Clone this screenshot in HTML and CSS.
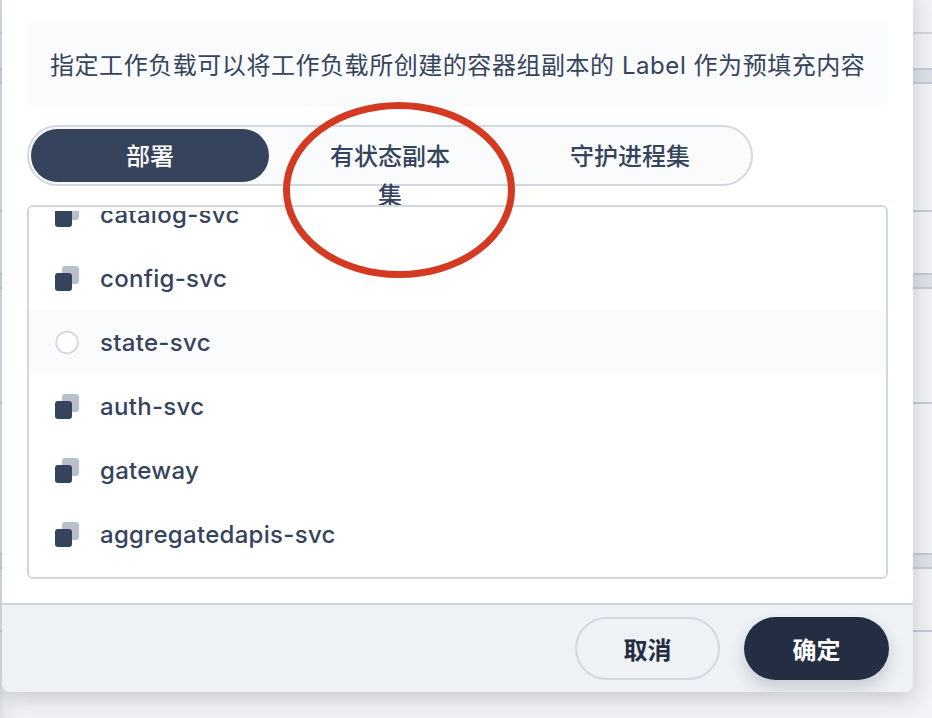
FILE: index.html
```html
<!DOCTYPE html>
<html lang="zh">
<head>
<meta charset="utf-8">
<title>Workload selector</title>
<link rel="stylesheet" href="styles.css">
</head>
<body>
<div class="page">
  <div class="bg-table">
    <div class="bg-row r1"></div>
    <div class="bg-row r2"></div>
    <div class="bg-row band"></div>
    <div class="bg-row r3"></div>
    <div class="bg-row r4"></div>
    <div class="bg-row band"></div>
    <div class="bg-row r5"></div>
    <div class="bg-row r6"></div>
    <div class="bg-row band"></div>
    <div class="bg-row r7"></div>
  </div>

  <div class="modal">
    <div class="modal-body">
      <div class="info">指定工作负载可以将工作负载所创建的容器组副本的 Label 作为预填充内容</div>

      <div class="tabs">
        <div class="tab active">部署</div>
        <div class="tab">有状态副本集</div>
        <div class="tab">守护进程集</div>
      </div>

      <div class="list">
        <div class="viewport">
          <div class="rows">
            <div class="row">
              <svg class="ico" viewBox="0 0 25 25"><rect x="7" y="0" width="17" height="18" rx="3" fill="#b7c0cb"/><rect x="0" y="7" width="17" height="18" rx="3" fill="#36435c"/></svg>
              <span class="name">catalog-svc</span>
            </div>
            <div class="row">
              <svg class="ico" viewBox="0 0 25 25"><rect x="7" y="0" width="17" height="18" rx="3" fill="#b7c0cb"/><rect x="0" y="7" width="17" height="18" rx="3" fill="#36435c"/></svg>
              <span class="name">config-svc</span>
            </div>
            <div class="row hover">
              <svg class="ico" viewBox="0 0 25 25"><circle cx="12" cy="12.5" r="10.8" fill="#ffffff" stroke="#d2d8df" stroke-width="1.8"/></svg>
              <span class="name">state-svc</span>
            </div>
            <div class="row">
              <svg class="ico" viewBox="0 0 25 25"><rect x="7" y="0" width="17" height="18" rx="3" fill="#b7c0cb"/><rect x="0" y="7" width="17" height="18" rx="3" fill="#36435c"/></svg>
              <span class="name">auth-svc</span>
            </div>
            <div class="row">
              <svg class="ico" viewBox="0 0 25 25"><rect x="7" y="0" width="17" height="18" rx="3" fill="#b7c0cb"/><rect x="0" y="7" width="17" height="18" rx="3" fill="#36435c"/></svg>
              <span class="name">gateway</span>
            </div>
            <div class="row">
              <svg class="ico" viewBox="0 0 25 25"><rect x="7" y="0" width="17" height="18" rx="3" fill="#b7c0cb"/><rect x="0" y="7" width="17" height="18" rx="3" fill="#36435c"/></svg>
              <span class="name">aggregatedapis-svc</span>
            </div>
          </div>
        </div>
      </div>
    </div>

    <div class="modal-footer">
      <button class="btn btn-default">取消</button>
      <button class="btn btn-primary">确定</button>
    </div>
  </div>

  <svg class="annotation" viewBox="0 0 240 186" width="240" height="186">
    <ellipse cx="119" cy="92" rx="112.5" ry="84.5" fill="none" stroke="#d33a21" stroke-width="7"/>
  </svg>
</div>
</body>
</html>
```

FILE: styles.css
```css
* { box-sizing: border-box; }

html, body {
  margin: 0;
  padding: 0;
}

body {
  width: 932px;
  height: 718px;
  overflow: hidden;
  background: #eef1f5;
  font-family: Inter, "Noto Sans CJK SC", sans-serif;
  color: #36435c;
}

.page {
  position: relative;
  width: 932px;
  height: 718px;
  overflow: hidden;
  background: linear-gradient(to right, #dde1e6 0, #e9ecf0 6px, #f1f3f6 18px);
}

/* background table behind the modal */
.bg-table {
  display: flex;
  flex-direction: column;
  width: 100%;
}

.bg-row {
  border-bottom: 2px solid #c6cdd6;
}

.r1 { height: 34px; border-bottom-color: #d3d8df; }
.r2 { height: 36px; }
.band { height: 14px; background: rgba(200, 207, 216, 0.45); }
.r3 { height: 128px; }
.r4 { height: 63px; }
.r5 { height: 115px; }
.r6 { height: 151px; }
.r7 { height: 63px; }

/* modal overlay */
.modal {
  position: absolute;
  left: 2px;
  top: -10px;
  width: 911px;
  background: #ffffff;
  border-radius: 8px;
  box-shadow: 0 6px 22px rgba(36, 46, 66, 0.22);
  overflow: hidden;
}

.modal-body {
  padding: 30px 25px 24px;
  display: flex;
  flex-direction: column;
}

.info {
  height: 87px;
  background: #f9fbfd;
  border-radius: 8px;
  padding: 0 23px;
  display: flex;
  align-items: center;
  font-size: 24px;
  letter-spacing: 0.55px;
  color: #36435c;
  white-space: nowrap;
}

.tabs {
  margin-top: 18px;
  width: 726px;
  height: 61px;
  padding: 2px;
  border: 2px solid #d2d8df;
  border-radius: 31px;
  background: #f9fbfc;
  display: flex;
  align-items: flex-start;
  gap: 2px;
}

.tab {
  width: 238px;
  height: 53px;
  padding: 8px 48px 0;
  line-height: 39px;
  font-size: 24px;
  font-weight: 500;
  text-align: center;
  color: #36435c;
  border-radius: 27px;
  overflow: visible;
}

.tab.active {
  background: #36435c;
  color: #ffffff;
}

.list {
  margin-top: 19px;
  height: 374px;
  border: 2px solid #d2d8df;
  border-radius: 6px;
  padding-top: 4px;
  overflow: hidden;
}

.viewport {
  height: 100%;
  overflow: hidden;
}

.rows {
  margin-top: -29px;
}

.row {
  height: 64px;
  display: flex;
  align-items: center;
  padding-left: 26px;
  gap: 20px;
}

.row.hover {
  background: #f9fbfc;
}

.ico {
  width: 25px;
  height: 25px;
  flex: none;
}

.name {
  font-size: 24px;
  font-weight: 500;
  color: #36435c;
  letter-spacing: 0.3px;
}

.modal-footer {
  height: 89px;
  background: #eef2f6;
  border-top: 2px solid #ccd3db;
  display: flex;
  align-items: center;
  justify-content: flex-end;
  gap: 24px;
  padding: 0 24px 0 0;
}

.btn {
  height: 63px;
  width: 145px;
  border-radius: 32px;
  font-family: Inter, "Noto Sans CJK SC", sans-serif;
  font-size: 24px;
  font-weight: 700;
  cursor: pointer;
}

.btn-default {
  background: transparent;
  border: 2px solid #d2d8df;
  color: #242e42;
}

.btn-primary {
  background: #242e42;
  border: none;
  color: #ffffff;
  box-shadow: 0 8px 16px rgba(36, 46, 66, 0.2);
}

.annotation {
  position: absolute;
  left: 280px;
  top: 98px;
}
```
